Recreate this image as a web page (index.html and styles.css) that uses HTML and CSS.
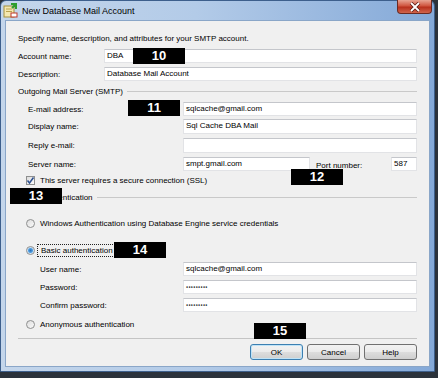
FILE: index.html
```html
<!DOCTYPE html>
<html lang="en">
<head>
    <meta charset="UTF-8">
    <title>New Database Mail Account</title>
    <link rel="stylesheet" href="styles.css">
</head>
<body>
    <div class="window">
        <div class="titlebar">
            <svg class="app-icon" width="15" height="15" viewBox="0 0 15 15">
                <rect x="1" y="3" width="10" height="11" fill="#f3e7b0" stroke="#a58f3c"/>
                <line x1="3" y1="6" x2="9" y2="6" stroke="#b9a24e"/>
                <line x1="3" y1="8.5" x2="9" y2="8.5" stroke="#b9a24e"/>
                <rect x="8" y="10" width="6" height="4" fill="#fff" stroke="#c0392b"/>
                <path d="M8 1 L13 1 L13 6 M13 1 L9 5" fill="none" stroke="#2e9d2e" stroke-width="2"/>
            </svg>
            <span class="title">New Database Mail Account</span>
            <div class="close">
                <svg width="12" height="10" viewBox="0 0 12 10">
                    <path d="M2 1 L10 9 M10 1 L2 9" stroke="#5a1a14" stroke-width="3.4"/>
                    <path d="M2 1 L10 9 M10 1 L2 9" stroke="#ffffff" stroke-width="1.8"/>
                </svg>
            </div>
        </div>

        <div class="client">
            <p class="intro">Specify name, description, and attributes for your SMTP account.</p>

            <div class="field general first">
                <span class="label">Account name:</span>
                <div class="input">DBA</div>
            </div>
            <div class="field general">
                <span class="label">Description:</span>
                <div class="input">Database Mail Account</div>
            </div>

            <div class="group smtp-head">Outgoing Mail Server (SMTP)</div>

            <div class="field smtp email">
                <span class="label">E-mail address:</span>
                <div class="input">sqlcache@gmail.com</div>
            </div>
            <div class="field smtp display">
                <span class="label">Display name:</span>
                <div class="input">Sql Cache DBA Mail</div>
            </div>
            <div class="field smtp reply">
                <span class="label">Reply e-mail:</span>
                <div class="input"></div>
            </div>
            <div class="field smtp server">
                <span class="label">Server name:</span>
                <div class="input server-input">smpt.gmail.com</div>
                <span class="port-label">Port number:</span>
                <div class="input">587</div>
            </div>

            <div class="option ssl">
                <span class="checkbox">
                    <svg width="9" height="9" viewBox="0 0 9 9">
                        <path d="M1.5 4.5 L3.5 7 L7.5 1.5" fill="none" stroke="#2b4f8f" stroke-width="1.5"/>
                    </svg>
                </span>
                <span>This server requires a secure connection (SSL)</span>
            </div>

            <div class="group auth-head">SMTP Authentication</div>

            <div class="option windows-auth">
                <span class="radio"></span>
                <span>Windows Authentication using Database Engine service credentials</span>
            </div>
            <div class="option basic-auth">
                <span class="radio checked"></span>
                <span class="focused">Basic authentication</span>
            </div>

            <div class="field auth user">
                <span class="label">User name:</span>
                <div class="input">sqlcache@gmail.com</div>
            </div>
            <div class="field auth pass">
                <span class="label">Password:</span>
                <div class="input"><span class="dots">●●●●●●●●●</span></div>
            </div>
            <div class="field auth pass">
                <span class="label">Confirm password:</span>
                <div class="input"><span class="dots">●●●●●●●●●</span></div>
            </div>

            <div class="option anon-auth">
                <span class="radio"></span>
                <span>Anonymous authentication</span>
            </div>

            <div class="separator"></div>

            <div class="buttons">
                <button class="default">OK</button>
                <button>Cancel</button>
                <button>Help</button>
            </div>
        </div>

        <div class="tag tag-10">10</div>
        <div class="tag tag-11">11</div>
        <div class="tag tag-12">12</div>
        <div class="tag tag-13">13</div>
        <div class="tag tag-14">14</div>
        <div class="tag tag-15">15</div>
    </div>
</body>
</html>
```

FILE: styles.css
```css
body {
    margin: 0;
    background-color: #2b323b;
    font-family: "Liberation Sans", Arial, sans-serif;
    font-size: 8px;
    color: #000;
}
.window {
    position: relative;
    box-sizing: border-box;
    width: 435px;
    height: 372px;
    border: 1px solid #3d5f8c;
    border-radius: 6px 6px 0 0;
    background: linear-gradient(to right, #c4d6eb 0%, #b3cbe8 45%, #84a9d8 100%);
}
.titlebar {
    display: flex;
    align-items: center;
    height: 19px;
}
.app-icon {
    margin-left: 2px;
}
.title {
    margin-left: 4px;
    font-size: 9px;
}
.close {
    display: flex;
    align-items: center;
    justify-content: center;
    align-self: flex-start;
    width: 35px;
    height: 14px;
    margin: -1px 2px 0 auto;
    box-sizing: border-box;
    border: 1px solid #6b2a22;
    border-top: none;
    border-radius: 0 0 4px 4px;
    background: linear-gradient(#e8a493 0%, #d0553f 45%, #b8301c 55%, #d0654d 100%);
}
.client {
    box-sizing: border-box;
    width: 425px;
    height: 347px;
    margin-left: 4px;
    padding: 12px 12px 0 12px;
    background-color: #f0f0f0;
    border: 1px solid #8aa6c8;
}
.intro {
    margin: 0;
    height: 12px;
    line-height: 12px;
}
.field {
    display: flex;
    align-items: center;
    height: 14px;
}
.field .label {
    flex-shrink: 0;
}
.general {
    margin-top: 4px;
}
.general .label {
    width: 86px;
}
.smtp {
    padding-left: 10px;
}
.smtp .label {
    width: 155px;
}
.auth {
    padding-left: 22px;
}
.auth .label {
    width: 143px;
}
.input {
    flex: 1;
    box-sizing: border-box;
    height: 100%;
    padding-left: 2px;
    line-height: 12px;
    background-color: #fff;
    border: 1px solid #e2e3e6;
    border-top-color: #c4c6cb;
    white-space: nowrap;
}
.email { margin-top: 5px; }
.display { margin-top: 3px; height: 15px; }
.reply { margin-top: 4px; height: 15px; }
.server { margin-top: 4px; }
.server-input {
    flex: 0 0 127px;
}
.port-label {
    width: 75px;
    margin-left: 6px;
    padding-top: 2px;
}
.group {
    display: flex;
    align-items: center;
    height: 12px;
}
.group::after {
    content: "";
    flex: 1;
    margin-left: 4px;
    border-top: 1px solid #c9c9c9;
}
.smtp-head { margin-top: 4px; }
.auth-head { margin-top: 5px; }
.option {
    display: flex;
    align-items: center;
    height: 12px;
    padding-left: 8px;
}
.ssl { margin-top: 4px; height: 11px; }
.windows-auth { margin-top: 14px; }
.basic-auth { margin-top: 15px; height: 13px; }
.anon-auth { margin-top: 6px; }
.checkbox, .radio {
    flex-shrink: 0;
    box-sizing: border-box;
    width: 9px;
    height: 9px;
    margin-right: 5px;
    border: 1px solid #8e8f8f;
    background: linear-gradient(135deg, #dcdcdc, #fbfbfb);
}
.checkbox svg {
    display: block;
    margin: -1px;
}
.radio {
    border-radius: 50%;
}
.radio.checked {
    margin-right: 2px;
    background: radial-gradient(circle, #2d6fb8 0, #4f9ee0 2px, #c9dff2 3px, #f4f4f4 4px);
}
.focused {
    padding: 0 3px;
    line-height: 11px;
    border: 1px dotted #222;
}
.user { margin-top: 5px; }
.pass { margin-top: 4px; }
.dots {
    font-size: 3.5px;
    letter-spacing: 0.3px;
    vertical-align: top;
}
.separator {
    margin-top: 8px;
    border-top: 1px solid #c4c4c4;
}
.buttons {
    display: flex;
    justify-content: flex-end;
    gap: 4px;
    margin-top: 5px;
}
button {
    width: 53px;
    height: 16px;
    padding: 0;
    font-family: "Liberation Sans", Arial, sans-serif;
    font-size: 8px;
    color: #000;
    border: 1px solid #707070;
    border-radius: 3px;
    background: linear-gradient(#f2f2f2 0%, #ebebeb 48%, #dddddd 52%, #cfcfcf 100%);
}
button.default {
    border-color: #3c7fb1;
    box-shadow: inset 0 0 0 1px #bfe3f7;
}
.tag {
    position: absolute;
    width: 52px;
    height: 16px;
    line-height: 16px;
    text-align: center;
    background-color: #000;
    color: #fff;
    font-size: 13px;
    font-weight: bold;
}
.tag-10 { left: 132px; top: 47px; }
.tag-11 { left: 127px; top: 99px; }
.tag-12 { left: 290px; top: 168px; }
.tag-13 { left: 9px; top: 187px; }
.tag-14 { left: 113px; top: 241px; }
.tag-15 { left: 253px; top: 322px; }
```
